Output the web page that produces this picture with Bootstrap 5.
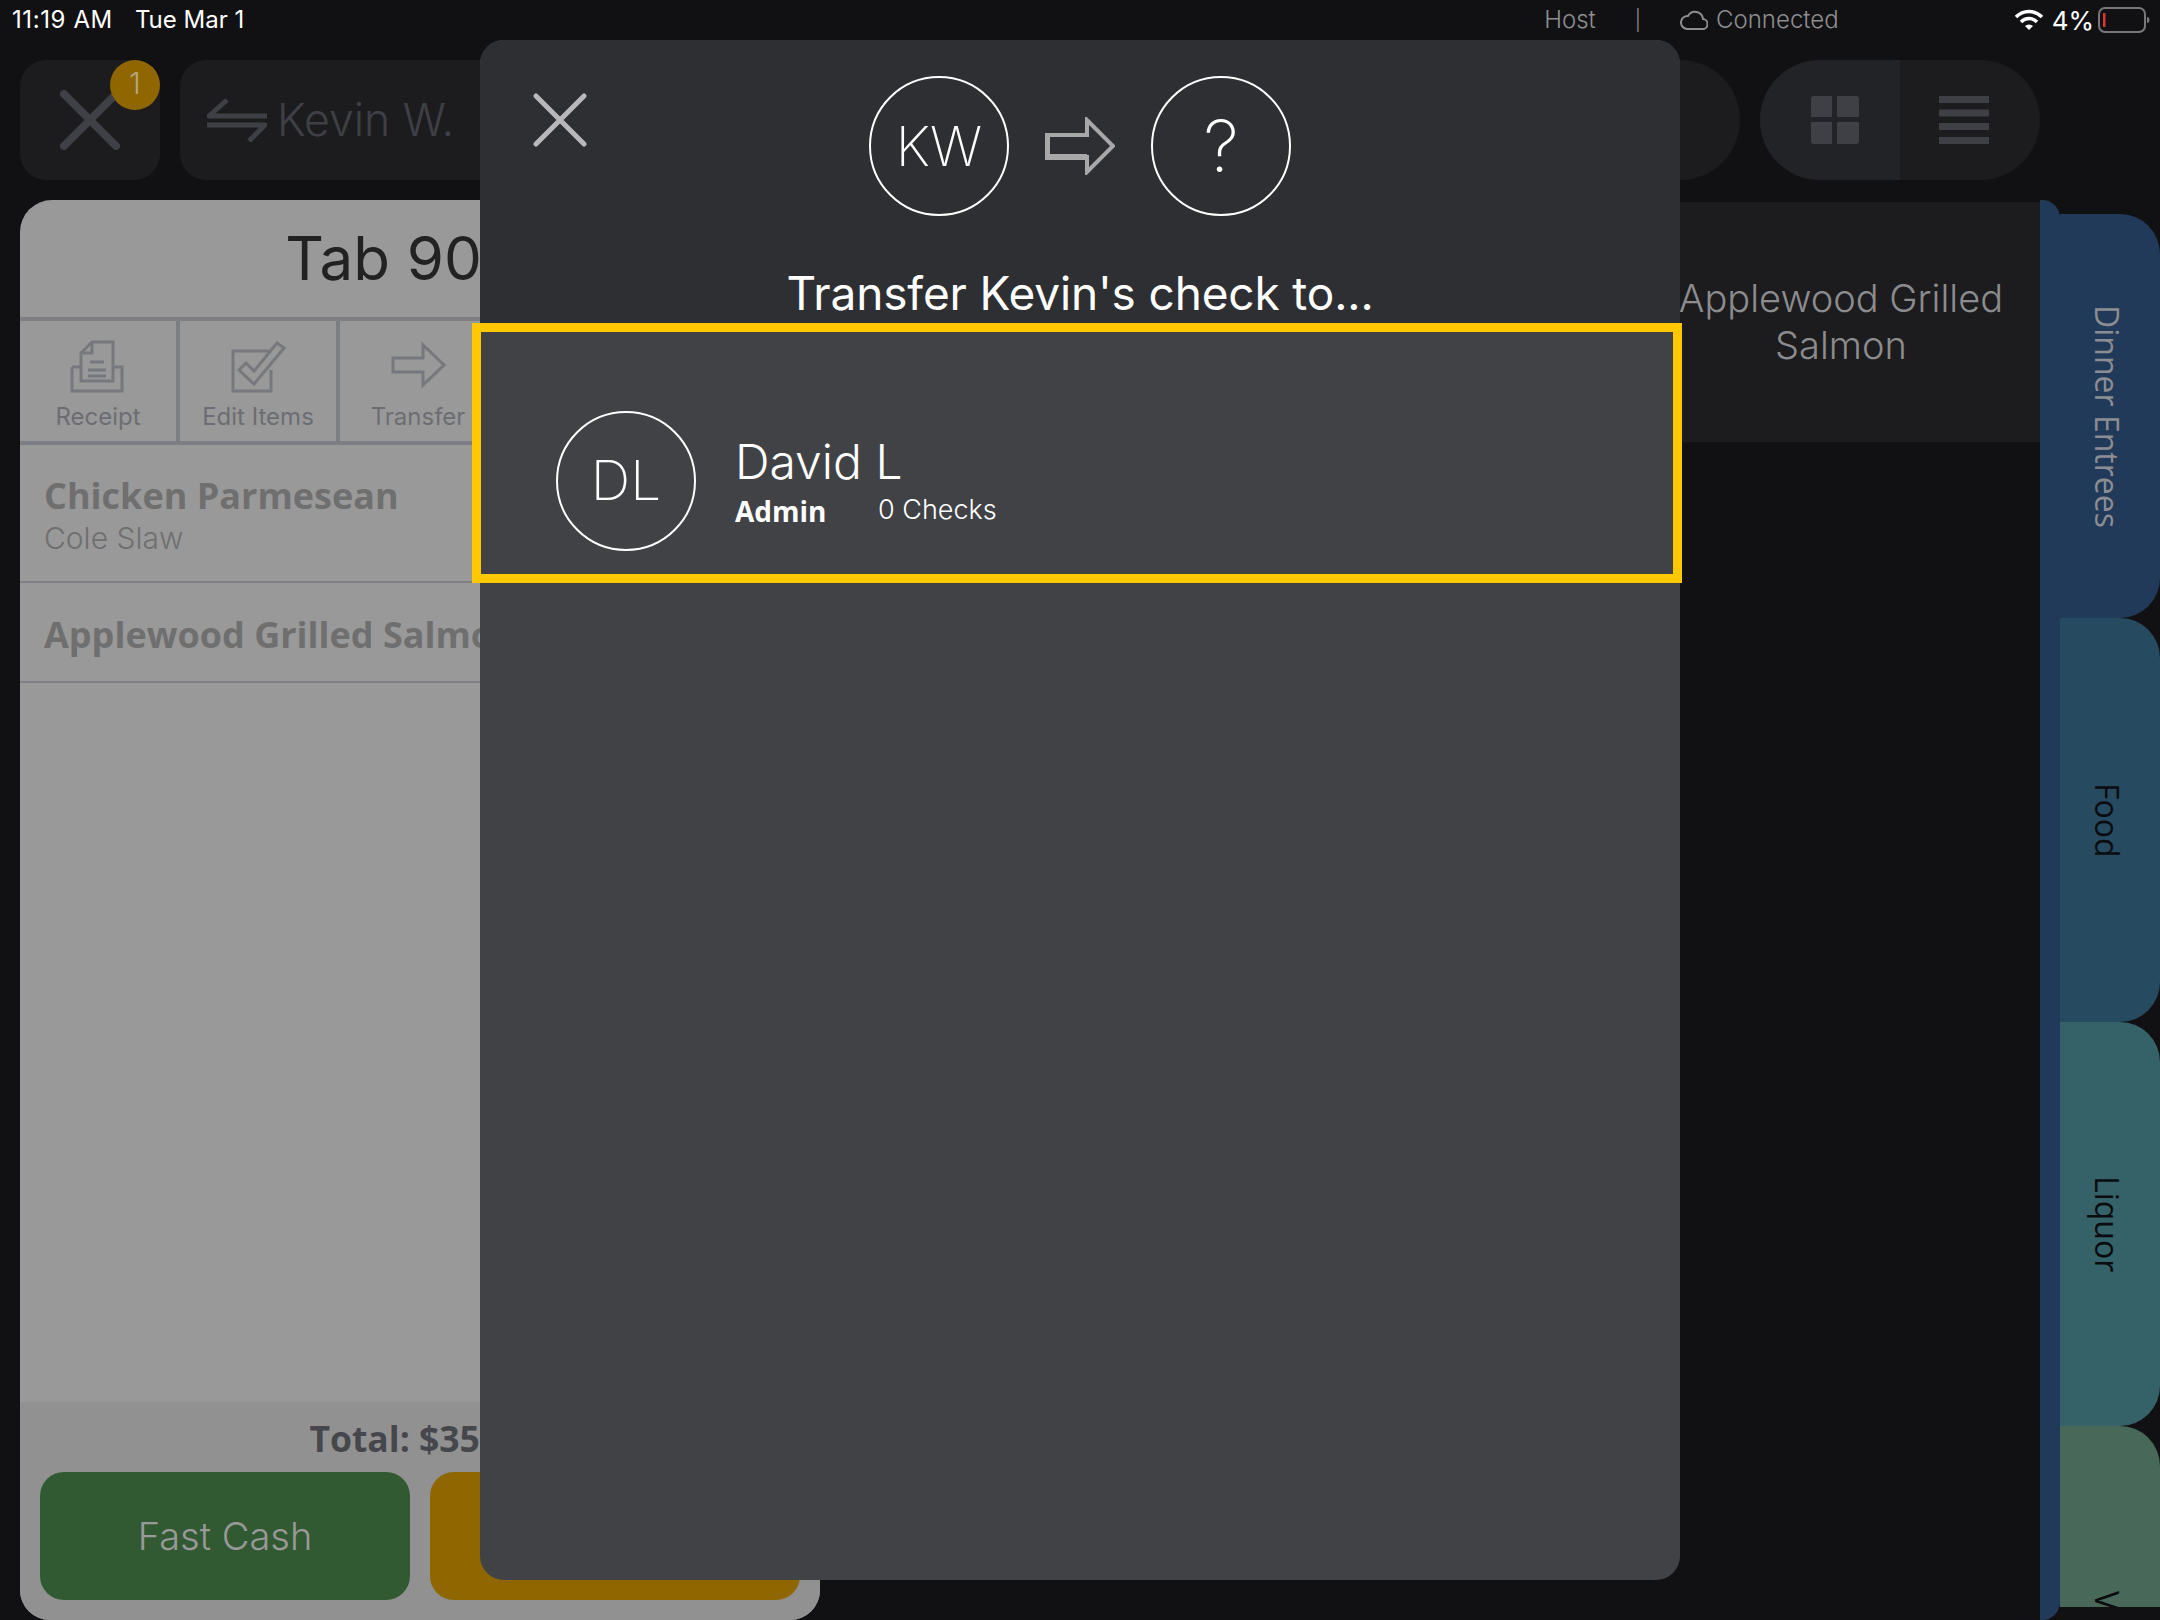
<!DOCTYPE html>
<html lang="en">
<head>
  <meta charset="UTF-8">
  <meta name="viewport" content="width=device-width, initial-scale=1.0">
  <title>Transfer check</title>
  <link href="https://cdn.jsdelivr.net/npm/bootstrap@5.3.3/dist/css/bootstrap.min.css" rel="stylesheet">
  <style>
    body { width: 2160px; height: 1620px; background: #111114; font-family: Inter, sans-serif; overflow: hidden; }
    .status-bar { height: 40px; padding: 0 10px 0 12px; font-size: 24px; color: #fff; }
    .status-time { letter-spacing: .6px; }
    .status-date { margin-left: 22px; }
    .status-host { color: #8e8e90; font-weight: 300; }
    .host-label { margin-left: 1300px; }
    .host-sep { margin-left: 39px; font-size: 20px; }
    .cloud-icon { margin-left: 39px; }
    .battery-text { font-size: 26px; }
    .top-bar { height: 120px; margin: 20px 0 20px 20px; }
    .tile { background: #1c1c1f; color: #3f4046; }
    .close-tile { width: 140px; border-radius: 26px; }
    .count-badge { width: 50px; height: 50px; padding-bottom: 4px; background: #8f6600; color: #b5a680; font-size: 30px; font-weight: 300; top: 0; right: 0; }
    .server-tile { width: 400px; margin-left: 20px; border-radius: 26px; padding-left: 27px; gap: 10px; font-size: 44.5px; font-weight: 300; }
    .round-tile { width: 300px; margin-left: 860px; border-radius: 60px; }
    .view-group { width: 280px; margin-left: 20px; border-radius: 60px; overflow: hidden; }
    .view-group > div { width: 140px; }
    .view-on { background: #222326; padding-left: 10px; }
    .view-off { padding-right: 12px; }
    .ticket { width: 800px; height: 1420px; margin-left: 20px; background: #999; border-radius: 32px 32px 30px 30px; overflow: hidden; }
    .ticket-title { height: 117px; padding-right: 12px; font-size: 60px; font-weight: 400; color: #222; line-height: 117px; }
    .tools { height: 128px; border-top: 4px solid #7e7f84; border-bottom: 4px solid #7e7f84; }
    .tool { width: 160px; border-right: 4px solid #7e7f84; color: #6c6d72; font-size: 24px; padding-top: 19px; }
    .tool svg { display: block; margin: 0 auto 5px; }
    .ticket-line { border-bottom: 2px solid #7e7f84; padding-left: 24px; color: #6f6f6f; }
    .line-one { height: 138px; padding-top: 27px; }
    .line-two { height: 100px; padding-top: 28px; }
    .dish { font-family: "Open Sans", sans-serif; font-weight: 700; font-size: 36px; line-height: 47px; white-space: nowrap; }
    .dish-note { font-size: 30px; line-height: 38px; font-weight: 300; }
    .ticket-foot { height: 218px; background: #919191; padding: 0 20px; }
    .total { font-family: "Open Sans", sans-serif; font-weight: 700; font-size: 35.500px; color: #46474c; line-height: 72px; height: 70px; }
    .pay-btn { width: 370px; height: 128px; border-radius: 24px; font-size: 38px; font-weight: 300; color: #999; }
    .pay-cash { background: #325a32; }
    .pay-card { background: #8f6600; }
    .menu-area { width: 1220px; }
    .menu-item { width: 398px; height: 240px; margin-top: 2px; background: #1c1c1e; color: #8c8c8e; font-size: 38px; font-weight: 300; line-height: 47px; }
    .tab-rail { width: 120px; height: 1420px; }
    .rail-strip { width: 20px; background: #223a59; border-radius: 0 18px 18px 0; }
    .tab-stack { width: 100px; padding-top: 14px; }
    .menu-tab { width: 100px; height: 404px; border-radius: 0 40px 40px 0; writing-mode: vertical-rl; font-family: "Open Sans", sans-serif; font-size: 32px; color: #0b0c0e; padding-right: 6px; overflow: hidden; }
    .tab-dinner { background: #223a59; color: #8b8d92; }
    .tab-food { background: #264a60; }
    .tab-liquor { background: #356169; }
    .tab-last { background: #486859; height: 181px; border-radius: 0 40px 0 0; padding-top: 165px; }
    .xfer-modal { left: 480px; top: 40px; width: 1200px; height: 1540px; background: #414246; border-radius: 24px; z-index: 5; }
    .xfer-head { height: 283px; background: #2e2f33; border-radius: 24px 24px 0 0; padding-top: 36px; }
    .xfer-close { left: 53px; top: 53px; }
    .initials { width: 140px; height: 140px; flex: none; border: 2px solid #fff; color: #fff; font-size: 55px; font-weight: 200; }
    .initials-unknown { font-size: 72px; }
    .xfer-arrows { gap: 36px; }
    .xfer-title { font-size: 46px; color: #fff; line-height: 60px; margin-top: 47px; font-weight: 400; letter-spacing: -.15px; }
    .pick-row { height: 260px; margin: 0 -2px 0 -8px; background: #414246; border: 9px solid #ffc800; padding: 55px 0 0 75px; gap: 39px; color: #fff; }
    .pick-name { font-size: 48px; font-weight: 300; line-height: 56px; margin-top: 4px; }
    .pick-role { font-family: "Open Sans", sans-serif; font-weight: 700; font-size: 28px; width: 143px; }
    .pick-checks { font-size: 27px; font-weight: 300; }
  </style>
</head>
<body class="position-relative">
  <div class="status-bar d-flex align-items-center">
    <span class="status-time">11:19 AM</span>
    <span class="status-date">Tue Mar 1</span>
    <span class="status-host host-label">Host</span>
    <span class="status-host host-sep">|</span>
    <svg class="cloud-icon" width="28" height="20" viewBox="0 0 28 20" fill="none" stroke="#8e8e90" stroke-width="2"><path d="M7 19h15a5 5 0 0 0 1-10 8 8 0 0 0-15-3 6.500 6.500 0 0 0-1 13z"/></svg>
    <span class="status-host ms-2">Connected</span>
    <svg class="ms-auto" width="30" height="22" viewBox="0 0 30 22" fill="none" stroke="#fff" stroke-width="3.500"><path d="M2 8a18 18 0 0 1 26 0"/><path d="M7 13a11 11 0 0 1 16 0"/><path d="M15 21l-4-4a6 6 0 0 1 8 0z" fill="#fff" stroke="none"/></svg>
    <span class="battery-text ms-2">4%</span>
    <svg class="ms-1" width="52" height="26" viewBox="0 0 52 26" fill="none"><rect x="1" y="1" width="46" height="24" rx="6" stroke="#77787c" stroke-width="2"/><rect x="5" y="6" width="2.500" height="14" fill="#e5332a"/><path d="M49 10c2 0 2.500 1.500 2.500 3s-.5 3-2.500 3z" fill="#77787c"/></svg>
  </div>

  <div class="top-bar d-flex">
    <div class="tile close-tile position-relative d-flex align-items-center justify-content-center">
      <svg width="60" height="60" viewBox="0 0 60 60" stroke="#3f4046" stroke-width="8" stroke-linecap="round"><path d="M4 4l52 52M56 4L4 56"/></svg>
      <span class="count-badge position-absolute rounded-circle d-flex align-items-center justify-content-center">1</span>
    </div>
    <div class="tile server-tile d-flex align-items-center">
      <svg width="60" height="44" viewBox="0 0 60 44" fill="none" stroke="#3f4046" stroke-width="5" stroke-linejoin="round"><path d="M60 18H2L20 2"/><path d="M0 27h58L42 43"/></svg>
      <span>Kevin W.</span>
    </div>
    <div class="tile round-tile"></div>
    <div class="view-group tile d-flex">
      <div class="view-on d-flex align-items-center justify-content-center">
        <svg width="50" height="50" viewBox="0 0 50 50" fill="#3f4046"><path d="M4 1h18v21H1V4a3 3 0 0 1 3-3zM27 1h19a3 3 0 0 1 3 3v18H27zM1 27h21v22H4a3 3 0 0 1-3-3zM27 27h22v19a3 3 0 0 1-3 3H27z"/></svg>
      </div>
      <div class="view-off d-flex align-items-center justify-content-center">
        <svg width="50" height="48" viewBox="0 0 50 48" fill="#3f4046"><rect width="50" height="7"/><rect y="13.500" width="50" height="7"/><rect y="27" width="50" height="7"/><rect y="41" width="50" height="7"/></svg>
      </div>
    </div>
  </div>

  <div class="d-flex">
    <div class="ticket d-flex flex-column">
      <div class="ticket-title text-center text-nowrap">Tab 9012</div>
      <div class="tools d-flex">
        <div class="tool text-center">
          <svg width="56" height="54" viewBox="0 0 56 54" fill="none" stroke="#77787d" stroke-width="3"><path d="M2 27v24h50V27h-9"/><path d="M11 27H2"/><path d="M11 41V13L22 2h21v39z"/><path d="M11 13h11V2"/><path d="M20 22h14M18 30h18M18 36h18"/></svg>
          Receipt
        </div>
        <div class="tool text-center">
          <svg width="56" height="54" viewBox="0 0 56 54" fill="none" stroke="#77787d" stroke-width="3"><path d="M42 11H3v40h38V30"/><path d="M9 30l7-7 8 8L47 3l7 5-30 36z"/></svg>
          Edit Items
        </div>
        <div class="tool text-center">
          <svg width="56" height="54" viewBox="0 0 56 54" fill="none" stroke="#77787d" stroke-width="3"><path d="M3 18h30V5l21 20-21 20V32H3z"/></svg>
          Transfer
        </div>
      </div>
      <div class="ticket-line line-one">
        <div class="dish">Chicken Parmesean</div>
        <div class="dish-note">Cole Slaw</div>
      </div>
      <div class="ticket-line line-two">
        <div class="dish">Applewood Grilled Salmon</div>
      </div>
      <div class="flex-grow-1"></div>
      <div class="ticket-foot text-center">
        <div class="total text-nowrap">Total: $35.00</div>
        <div class="d-flex justify-content-between">
          <div class="pay-btn pay-cash d-flex align-items-center justify-content-center">Fast Cash</div>
          <div class="pay-btn pay-card"></div>
        </div>
      </div>
    </div>

    <div class="menu-area d-flex justify-content-end">
      <div class="menu-item d-flex align-items-center justify-content-center text-center">Applewood Grilled<br>Salmon</div>
    </div>

    <div class="tab-rail d-flex">
      <div class="rail-strip"></div>
      <div class="tab-stack">
        <div class="menu-tab tab-dinner d-flex align-items-center justify-content-center">Dinner Entrees</div>
        <div class="menu-tab tab-food d-flex align-items-center justify-content-center">Food</div>
        <div class="menu-tab tab-liquor d-flex align-items-center justify-content-center">Liquor</div>
        <div class="menu-tab tab-last d-flex align-items-center">V</div>
      </div>
    </div>
  </div>

  <div class="xfer-modal position-absolute">
    <div class="xfer-head position-relative">
      <svg class="xfer-close position-absolute" width="54" height="54" viewBox="0 0 54 54" stroke="#b8b8b8" stroke-width="5" stroke-linecap="round"><path d="M3 3l48 48M51 3L3 51"/></svg>
      <div class="xfer-arrows d-flex justify-content-center align-items-center">
        <div class="initials rounded-circle d-flex align-items-center justify-content-center">KW</div>
        <svg width="70" height="58" viewBox="0 0 70 58" fill="none" stroke="#a8a8a8" stroke-width="4"><path d="M2 18h40V3l26 26-26 26V40H2z"/><path d="M2 18v22h40" stroke-width="6"/></svg>
        <div class="initials initials-unknown rounded-circle d-flex align-items-center justify-content-center">?</div>
      </div>
      <div class="xfer-title text-center">Transfer Kevin's check to...</div>
    </div>
    <div class="pick-row d-flex align-items-center">
      <div class="initials rounded-circle d-flex align-items-center justify-content-center">DL</div>
      <div>
        <div class="pick-name">David L</div>
        <div class="d-flex align-items-center">
          <span class="pick-role">Admin</span>
          <span class="pick-checks">0 Checks</span>
        </div>
      </div>
    </div>
  </div>

  <script src="https://cdn.jsdelivr.net/npm/bootstrap@5.3.3/dist/js/bootstrap.bundle.min.js"></script>
</body>
</html>
